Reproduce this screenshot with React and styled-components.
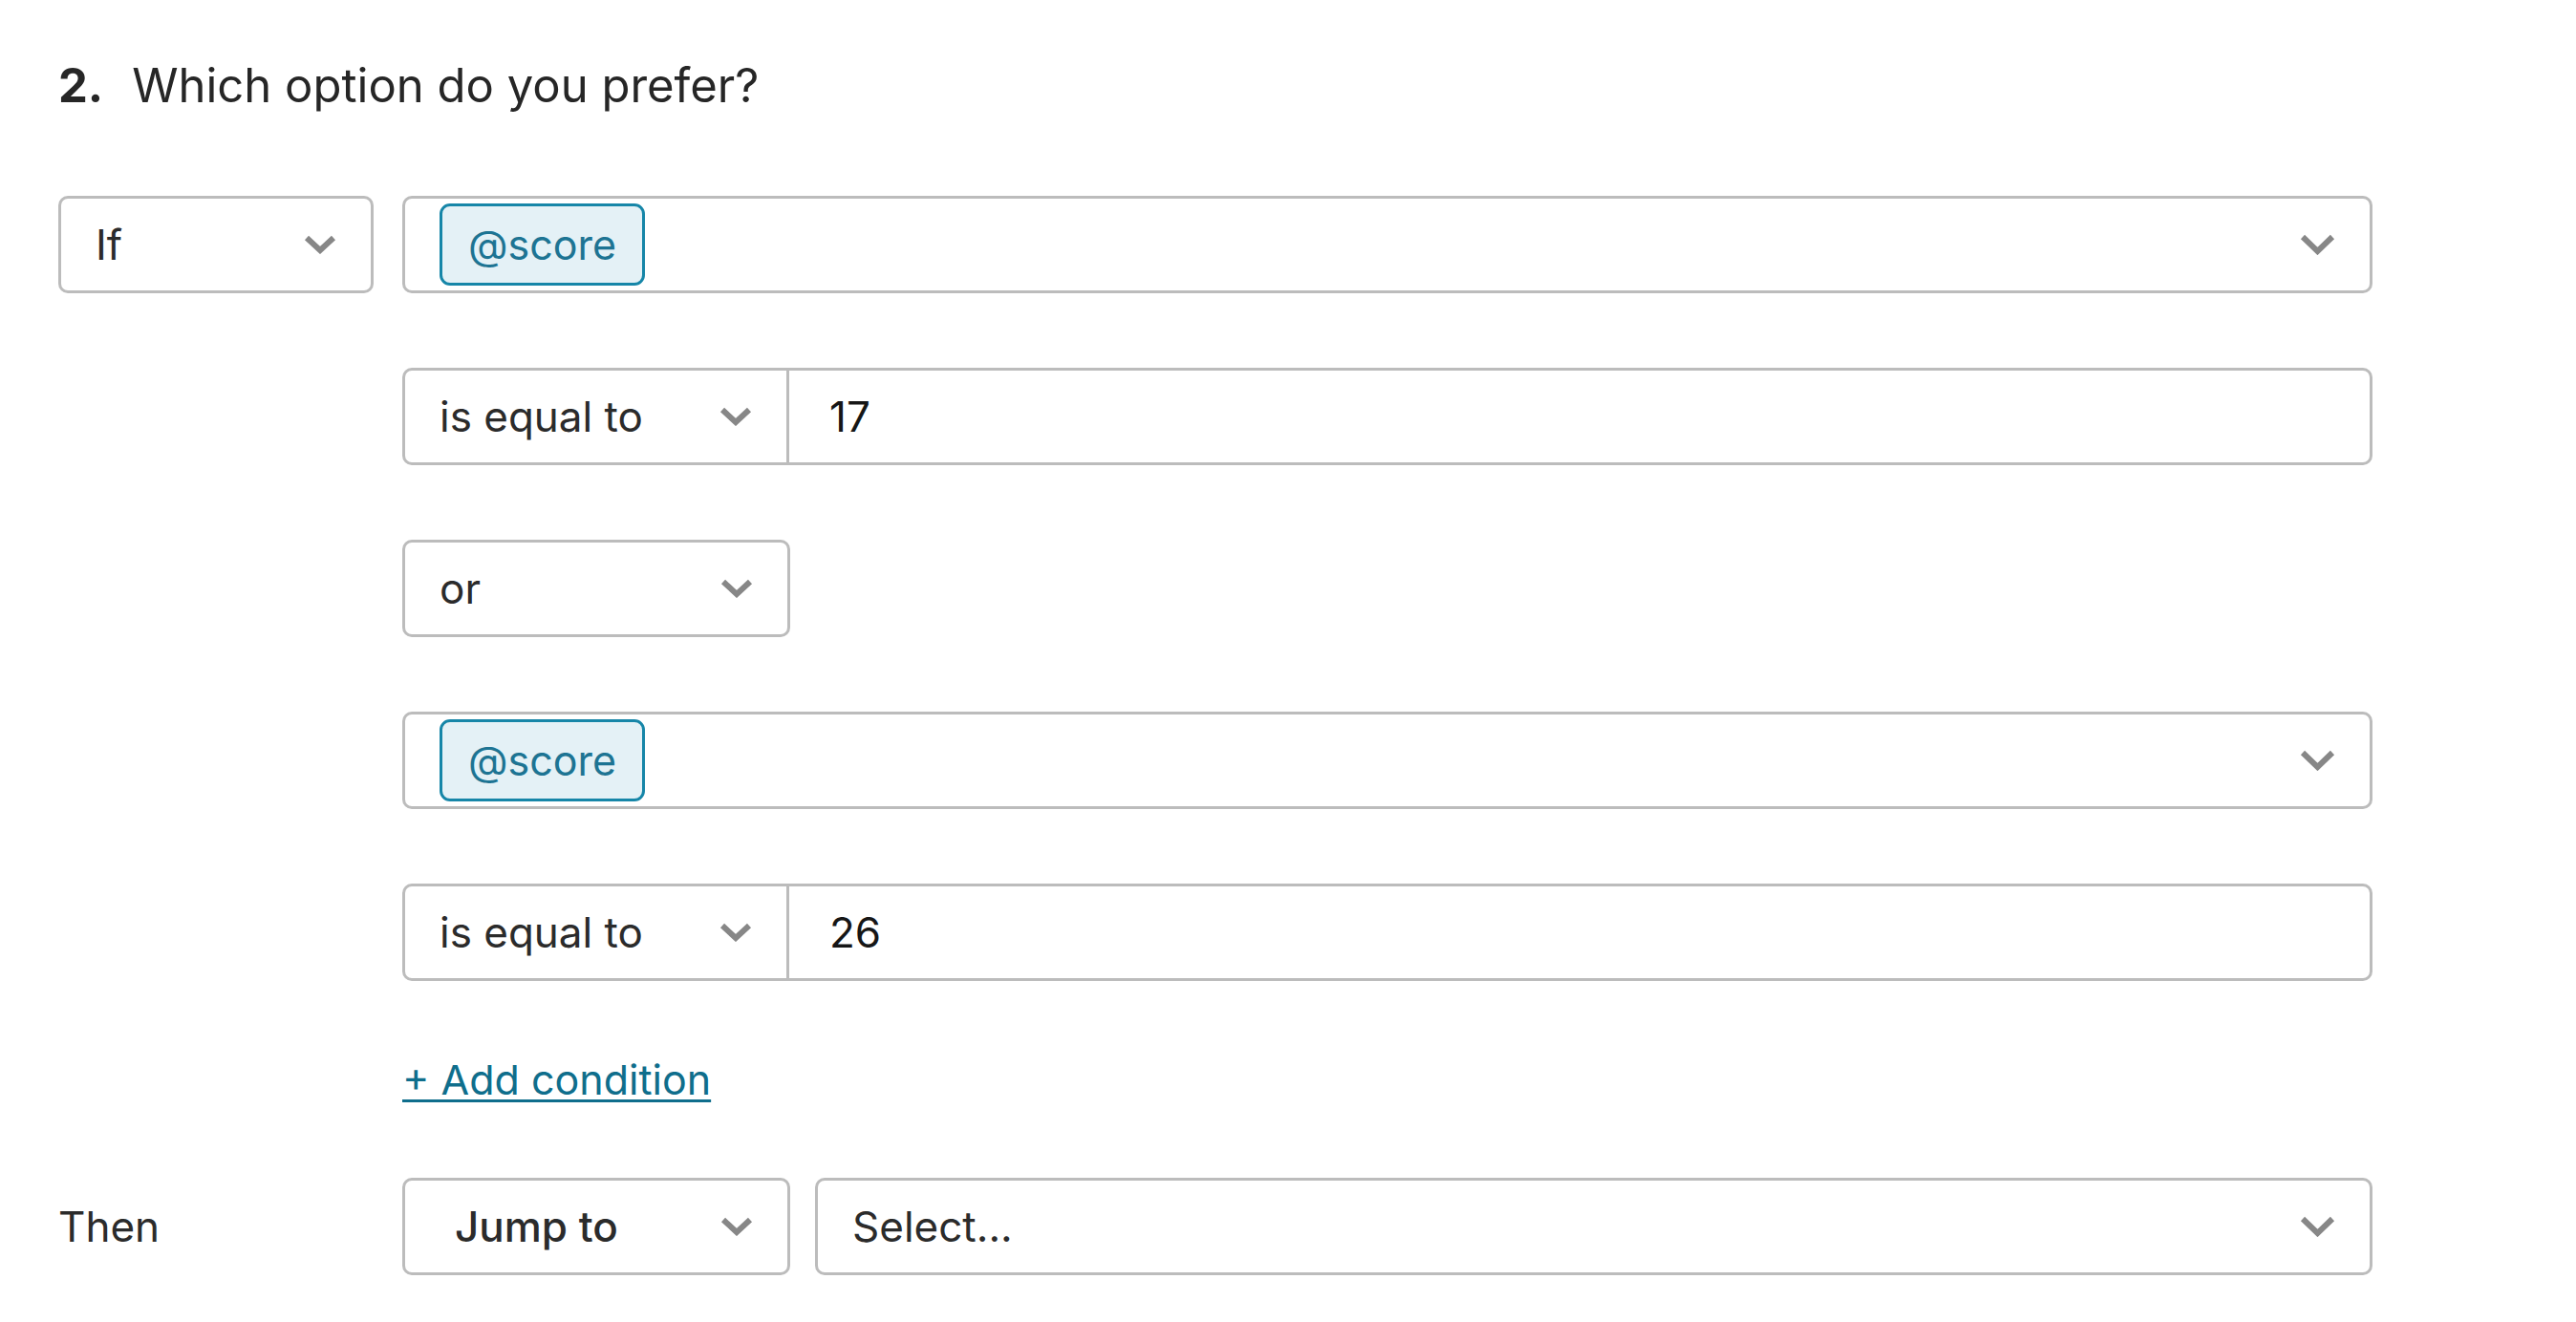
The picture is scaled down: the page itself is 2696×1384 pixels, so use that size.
import React from "react";
import styled, { createGlobalStyle } from "styled-components";

const GlobalStyle = createGlobalStyle`
  html, body {
    margin: 0;
    padding: 0;
    background: #ffffff;
  }
  body {
    font-family: Inter, "Helvetica Neue", "Liberation Sans", sans-serif;
    color: #2b2b2b;
  }
`;

const Page = styled.div`
  padding: 60px 0 0 61px;
`;

const Question = styled.h2`
  margin: 0 0 85px;
  font-size: 49px;
  line-height: 60px;
  font-weight: 400;
  color: #262626;
`;

const QuestionNumber = styled.span`
  font-weight: 700;
  margin-right: 30px;
`;

const Rules = styled.div`
  display: grid;
  grid-template-columns: 330px 2062px;
  column-gap: 30px;
  row-gap: 78px;
  align-items: center;
`;

const Label = styled.div`
  grid-column: 1;
  font-size: 44px;
  color: #2b2b2b;
`;

const Cell = styled.div`
  grid-column: ${(p) => p.$col || 2};
  display: flex;
  gap: 26px;
  min-width: 0;
`;

const Box = styled.div`
  box-sizing: border-box;
  height: 102px;
  width: ${(p) => (p.$w ? `${p.$w}px` : "auto")};
  flex: ${(p) => (p.$w ? "none" : "1")};
  border: 3px solid #bcbcbc;
  border-radius: 10px;
  background: #fff;
  display: flex;
  align-items: center;
  overflow: hidden;
`;

const SelectPart = styled.div`
  box-sizing: border-box;
  height: 100%;
  width: ${(p) => (p.$w ? `${p.$w}px` : "auto")};
  flex: ${(p) => (p.$w ? "none" : "1")};
  display: flex;
  align-items: center;
  padding: 0 36px 0 ${(p) => p.$pad || 36}px;
  border-right: ${(p) => (p.$divider ? "3px solid #bcbcbc" : "none")};
`;

const Value = styled.span`
  flex: 1;
  font-size: 44px;
  font-weight: ${(p) => p.$weight || 400};
  color: ${(p) => p.$color || "#2b2b2b"};
  white-space: nowrap;
`;

const InputPart = styled.div`
  flex: 1;
  height: 100%;
  display: flex;
  align-items: center;
  padding-left: 42px;
  font-size: 44px;
  color: #161616;
`;

const Chip = styled.span`
  box-sizing: border-box;
  height: 86px;
  display: inline-flex;
  align-items: center;
  padding: 0 27px;
  border: 3px solid #1686a8;
  border-radius: 11px;
  background: #e4f1f6;
  color: #1d7493;
  font-size: 43px;
`;

const ChipSlot = styled.div`
  flex: 1;
  display: flex;
  align-items: center;
`;

const LinkRow = styled.div`
  grid-column: 2;
  height: 50px;
  line-height: 50px;
`;

const AddLink = styled.a`
  font-size: 43px;
  color: #0f6e8c;
  text-decoration: underline;
  text-decoration-thickness: 3px;
  text-underline-offset: 5px;
  cursor: pointer;
`;

const Chevron = ({ big }) => {
  const w = big ? 37 : 34;
  const h = big ? 22 : 20;
  return (
    <svg width={w} height={h} viewBox={`0 0 ${w} ${h}`} style={{ flex: "none" }}>
      <polyline
        points={`3,3 ${w / 2},${h - 4} ${w - 3},3`}
        fill="none"
        stroke="#878787"
        strokeWidth="6"
      />
    </svg>
  );
};

const Select = ({ w, pad, weight, children, big }) => (
  <Box $w={w}>
    <SelectPart $pad={pad}>
      <Value $weight={weight}>{children}</Value>
      <Chevron big={big} />
    </SelectPart>
  </Box>
);

const VariableSelect = ({ name }) => (
  <Box>
    <SelectPart>
      <ChipSlot>
        <Chip>{name}</Chip>
      </ChipSlot>
      <Chevron big />
    </SelectPart>
  </Box>
);

const Comparison = ({ op, value }) => (
  <Box>
    <SelectPart $w={402} $divider>
      <Value>{op}</Value>
      <Chevron />
    </SelectPart>
    <InputPart>{value}</InputPart>
  </Box>
);

export default function App() {
  return (
    <Page>
      <GlobalStyle />
      <Question>
        <QuestionNumber>2.</QuestionNumber>Which option do you prefer?
      </Question>
      <Rules>
        <Cell $col={1}>
          <Select w={330}>If</Select>
        </Cell>
        <Cell>
          <VariableSelect name="@score" />
        </Cell>

        <Cell>
          <Comparison op="is equal to" value="17" />
        </Cell>

        <Cell>
          <Select w={406}>or</Select>
        </Cell>

        <Cell>
          <VariableSelect name="@score" />
        </Cell>

        <Cell>
          <Comparison op="is equal to" value="26" />
        </Cell>

        <LinkRow>
          <AddLink>+ Add condition</AddLink>
        </LinkRow>

        <Label>Then</Label>
        <Cell>
          <Select w={406} pad={52} weight={500}>
            Jump to
          </Select>
          <Select big>Select...</Select>
        </Cell>
      </Rules>
    </Page>
  );
}
